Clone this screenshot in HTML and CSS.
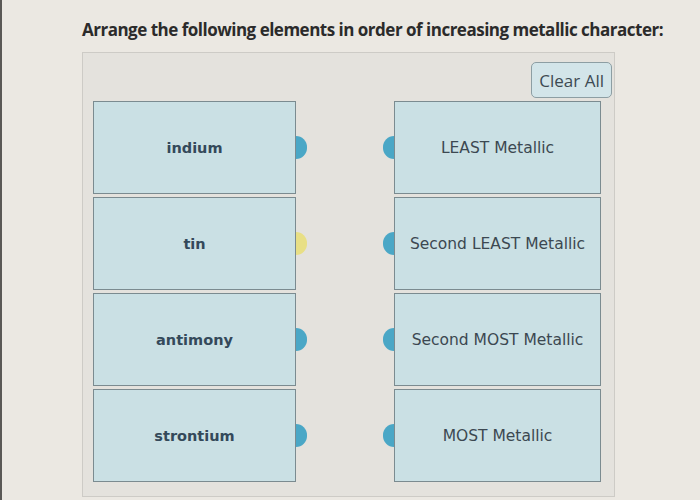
FILE: index.html
```html
<!DOCTYPE html>
<html lang="en">
<head>
    <meta charset="UTF-8">
    <meta name="viewport" content="width=device-width, initial-scale=1.0">
    <title>Metallic Character</title>
    <link rel="stylesheet" href="styles.css">
</head>
<body>
    <div class="page">
        <h2 class="prompt">Arrange the following elements in order of increasing metallic character:</h2>

        <div class="board">
            <div class="toolbar">
                <button type="button" class="clear-btn">Clear All</button>
            </div>

            <div class="columns">
                <!-- items to drag -->
                <div class="col">
                    <div class="card item">indium<span class="dot dot-right"></span></div>
                    <div class="card item">tin<span class="dot dot-right dot-yellow"></span></div>
                    <div class="card item">antimony<span class="dot dot-right"></span></div>
                    <div class="card item">strontium<span class="dot dot-right"></span></div>
                </div>

                <!-- targets -->
                <div class="col">
                    <div class="card target">LEAST Metallic<span class="dot dot-left"></span></div>
                    <div class="card target">Second LEAST Metallic<span class="dot dot-left"></span></div>
                    <div class="card target">Second MOST Metallic<span class="dot dot-left"></span></div>
                    <div class="card target">MOST Metallic<span class="dot dot-left"></span></div>
                </div>
            </div>
        </div>
    </div>
</body>
</html>
```

FILE: styles.css
```css
body {
    margin: 0;
    padding: 0;
    background-color: #ebe8e2;
    font-family: "DejaVu Sans", Verdana, sans-serif;
}
.page {
    height: 500px;
    box-sizing: border-box;
    padding: 18px 0 0 80px;
    border-left: 2px solid #5a5856;
    overflow: hidden;
}
.prompt {
    margin: 0 0 11px 0;
    font-family: "Open Sans", Arial, sans-serif;
    font-size: 17px;
    font-weight: bold;
    letter-spacing: -0.5px;
    white-space: nowrap;
    color: #2b2b2b;
}
.board {
    width: 533px;
    height: 445px;
    box-sizing: border-box;
    background-color: #e4e2dd;
    border: 1px solid #cdcbc6;
    padding: 0 14px 0 10px;
}
.toolbar {
    display: flex;
    justify-content: flex-end;
    padding-top: 9px;
}
.clear-btn {
    font-family: "Open Sans", Arial, sans-serif;
    font-size: 17px;
    color: #3d4a52;
    background-color: #d3e5e9;
    border: 1px solid #8d9ea3;
    border-radius: 5px;
    height: 36px;
    padding: 0 7px;
    margin-right: -12px;
}
.columns {
    display: grid;
    grid-template-columns: 203px 207px;
    column-gap: 98px;
    margin-top: 3px;
}
.col {
    display: flex;
    flex-direction: column;
    gap: 3px;
}
.card {
    position: relative;
    height: 93px;
    box-sizing: border-box;
    display: flex;
    align-items: center;
    justify-content: center;
    background-color: #cae0e4;
    border: 1px solid #7b8b90;
}
.item {
    font-size: 14.5px;
    font-weight: bold;
    color: #34495a;
}
.target {
    font-size: 15.5px;
    color: #3c4851;
}
.dot {
    position: absolute;
    top: 50%;
    width: 11px;
    height: 23px;
    margin-top: -12px;
    background-color: #4aa7c6;
}
.dot-right {
    right: -12px;
    border-radius: 0 12px 12px 0;
}
.dot-left {
    left: -12px;
    border-radius: 12px 0 0 12px;
}
.dot-yellow {
    background-color: #e8df85;
}
```
